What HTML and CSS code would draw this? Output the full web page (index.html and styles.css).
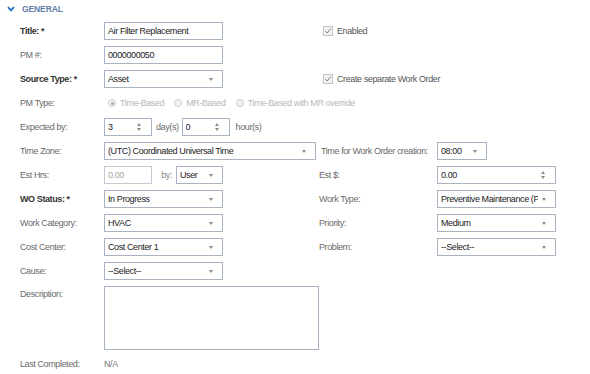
FILE: index.html
```html
<!DOCTYPE html>
<html>
<head>
<meta charset="utf-8">
<link rel="stylesheet" href="styles.css">
</head>
<body>
<div class="panel">
  <div class="section-head">
    <svg class="chev" width="8" height="6" viewBox="0 0 8 6"><path d="M1 1.2 L4 4.4 L7 1.2" fill="none" stroke="#1f6fc5" stroke-width="1.8"/></svg>
    <span class="section-title">GENERAL</span>
  </div>

  <div class="form">
    <div class="row">
      <div class="lbl req">Title: *</div>
      <div class="field"><div class="ctl w119">Air Filter Replacement</div></div>
      <div class="rlbl chk"><span class="cbox"><svg width="8" height="8" viewBox="0 0 8 8"><path d="M1.3 4.2 L3.2 6 L6.8 1.6" fill="none" stroke="#808080" stroke-width="1"/></svg></span>Enabled</div>
    </div>

    <div class="row">
      <div class="lbl">PM #:</div>
      <div class="field"><div class="ctl w119">0000000050</div></div>
    </div>

    <div class="row">
      <div class="lbl req">Source Type: *</div>
      <div class="field"><div class="ctl sel w119"><span class="val">Asset</span><span class="arr"></span></div></div>
      <div class="rlbl chk wide"><span class="cbox"><svg width="8" height="8" viewBox="0 0 8 8"><path d="M1.3 4.2 L3.2 6 L6.8 1.6" fill="none" stroke="#808080" stroke-width="1"/></svg></span>Create separate Work Order</div>
    </div>

    <div class="row">
      <div class="lbl">PM Type:</div>
      <div class="field radios">
        <span class="radio on"></span><span class="rtxt">Time-Based</span>
        <span class="radio"></span><span class="rtxt">MR-Based</span>
        <span class="radio"></span><span class="rtxt nowrap">Time-Based with MR override</span>
      </div>
    </div>

    <div class="row">
      <div class="lbl">Expected by:</div>
      <div class="field">
        <div class="ctl spin w48"><span class="val">3</span><span class="spn"></span></div>
        <span class="unit">day(s)</span>
        <div class="ctl spin w48"><span class="val">0</span><span class="spn"></span></div>
        <span class="unit u2">hour(s)</span>
      </div>
    </div>

    <div class="row">
      <div class="lbl">Time Zone:</div>
      <div class="field"><div class="ctl sel w212"><span class="val">(UTC) Coordinated Universal Time</span><span class="arr"></span></div></div>
      <div class="rlbl tight">Time for Work Order creation:</div>
      <div class="rfield"><div class="ctl sel w50"><span class="val">08:00</span><span class="arr"></span></div></div>
    </div>

    <div class="row">
      <div class="lbl">Est Hrs:</div>
      <div class="field">
        <div class="ctl dis w48">0.00</div>
        <span class="by">by:</span>
        <div class="ctl sel w47"><span class="val">User</span><span class="arr"></span></div>
      </div>
      <div class="rlbl">Est $:</div>
      <div class="rfield"><div class="ctl spin w119"><span class="val">0.00</span><span class="spn"></span></div></div>
    </div>

    <div class="row">
      <div class="lbl req">WO Status: *</div>
      <div class="field"><div class="ctl sel w119"><span class="val">In Progress</span><span class="arr"></span></div></div>
      <div class="rlbl">Work Type:</div>
      <div class="rfield"><div class="ctl sel w119"><span class="val">Preventive Maintenance (PM)</span><span class="arr"></span></div></div>
    </div>

    <div class="row">
      <div class="lbl">Work Category:</div>
      <div class="field"><div class="ctl sel w119"><span class="val">HVAC</span><span class="arr"></span></div></div>
      <div class="rlbl">Priority:</div>
      <div class="rfield"><div class="ctl sel w119"><span class="val">Medium</span><span class="arr"></span></div></div>
    </div>

    <div class="row">
      <div class="lbl">Cost Center:</div>
      <div class="field"><div class="ctl sel w119"><span class="val">Cost Center 1</span><span class="arr"></span></div></div>
      <div class="rlbl">Problem:</div>
      <div class="rfield"><div class="ctl sel w119"><span class="val">--Select--</span><span class="arr"></span></div></div>
    </div>

    <div class="row">
      <div class="lbl">Cause:</div>
      <div class="field"><div class="ctl sel w119"><span class="val">--Select--</span><span class="arr"></span></div></div>
    </div>

    <div class="row tall">
      <div class="lbl top">Description:</div>
      <div class="field"><div class="textarea"></div></div>
    </div>

    <div class="row last">
      <div class="lbl">Last Completed:</div>
      <div class="field plain">N/A</div>
    </div>
  </div>
</div>
</body>
</html>
```

FILE: styles.css
```css
html, body {
  margin: 0;
  padding: 0;
  background: #ffffff;
}

body {
  font-family: "Liberation Sans", Arial, sans-serif;
  font-size: 9px;
  letter-spacing: -0.4px;
  color: #333333;
}

.panel {
  width: 590px;
  height: 374px;
  overflow: hidden;
  padding: 0 0 0 7px;
  box-sizing: border-box;
}

.section-head {
  display: flex;
  align-items: center;
  height: 17px;
}

.chev {
  display: block;
  margin-right: 7px;
}

.section-title {
  font-weight: bold;
  font-size: 8.5px;
  letter-spacing: -0.1px;
  color: #5f7ea6;
}

.form {
  padding-top: 5px;
  padding-left: 13px;
}

.row {
  display: flex;
  align-items: center;
  height: 18px;
  margin-bottom: 6px;
}

.row.tall {
  height: 64px;
  align-items: flex-start;
}

.row.last {
  height: 16px;
}

.lbl {
  width: 84px;
  flex: none;
  color: #6a6a6a;
  white-space: nowrap;
}

.lbl.req {
  color: #333333;
  font-weight: bold;
}

.lbl.top {
  padding-top: 3px;
}

.field {
  width: 215px;
  flex: none;
  display: flex;
  align-items: center;
  height: 100%;
}

.field.plain {
  color: #777777;
}

.rlbl {
  width: 118px;
  flex: none;
  color: #6a6a6a;
  white-space: nowrap;
}

.rlbl.tight {
  padding-left: 2px;
  box-sizing: border-box;
}

.rlbl.chk {
  display: flex;
  align-items: center;
  padding-left: 4px;
  box-sizing: border-box;
  color: #555555;
}

.rlbl.wide {
  width: 200px;
}

.rfield {
  width: 119px;
  flex: none;
  display: flex;
  align-items: center;
  height: 100%;
}

.cbox {
  width: 10px;
  height: 10px;
  box-sizing: border-box;
  border: 1px solid #c2c2c2;
  background: #f2f2f2;
  display: flex;
  align-items: center;
  justify-content: center;
  margin-right: 4px;
}

.cbox svg {
  display: block;
}

.ctl {
  height: 18px;
  box-sizing: border-box;
  border: 1px solid #a9b3c1;
  background: #ffffff;
  color: #222222;
  padding: 0 3px;
  display: flex;
  align-items: center;
  white-space: nowrap;
  overflow: hidden;
  flex: none;
}

.ctl .val {
  flex: 1;
  overflow: hidden;
  white-space: nowrap;
}

.ctl.dis {
  color: #a8a8a8;
  border-color: #c4cad3;
}

.w119 { width: 119px; }
.w212 { width: 212px; }
.w48 { width: 48px; }
.w47 { width: 47px; }
.w50 { width: 50px; }

.arr {
  flex: none;
  width: 0;
  height: 0;
  border-left: 2.5px solid transparent;
  border-right: 2.5px solid transparent;
  border-top: 3px solid #8a8a8a;
  margin: 0 6px 0 4px;
}

.spn {
  flex: none;
  width: 5px;
  height: 8px;
  margin: 0 6px 0 4px;
  position: relative;
}

.spn::before,
.spn::after {
  content: "";
  position: absolute;
  left: 0;
  width: 0;
  height: 0;
  border-left: 2.5px solid transparent;
  border-right: 2.5px solid transparent;
}

.spn::before {
  top: 0;
  border-bottom: 3px solid #8a8a8a;
}

.spn::after {
  bottom: 0;
  border-top: 3px solid #8a8a8a;
}

.unit {
  color: #6a6a6a;
  margin: 0 3px 0 4px;
}

.unit.u2 {
  margin: 0 0 0 6px;
}

.by {
  color: #8a8a8a;
  margin: 0 4px 0 0;
  width: 20px;
  text-align: right;
}

.radios {
  color: #b8b8b8;
}

.radio {
  width: 8px;
  height: 8px;
  box-sizing: border-box;
  border: 1px solid #cccccc;
  border-radius: 50%;
  background: #f3f3f3;
  margin: 0 4px 0 4px;
  position: relative;
  flex: none;
}

.radio.on::after {
  content: "";
  position: absolute;
  left: 1.5px;
  top: 1.5px;
  width: 3px;
  height: 3px;
  border-radius: 50%;
  background: #aaaaaa;
}

.rtxt {
  margin-right: 6px;
  white-space: nowrap;
}

.textarea {
  width: 247px;
  height: 64px;
  box-sizing: border-box;
  border: 1px solid #a9b3c1;
  background: #ffffff;
}
```
